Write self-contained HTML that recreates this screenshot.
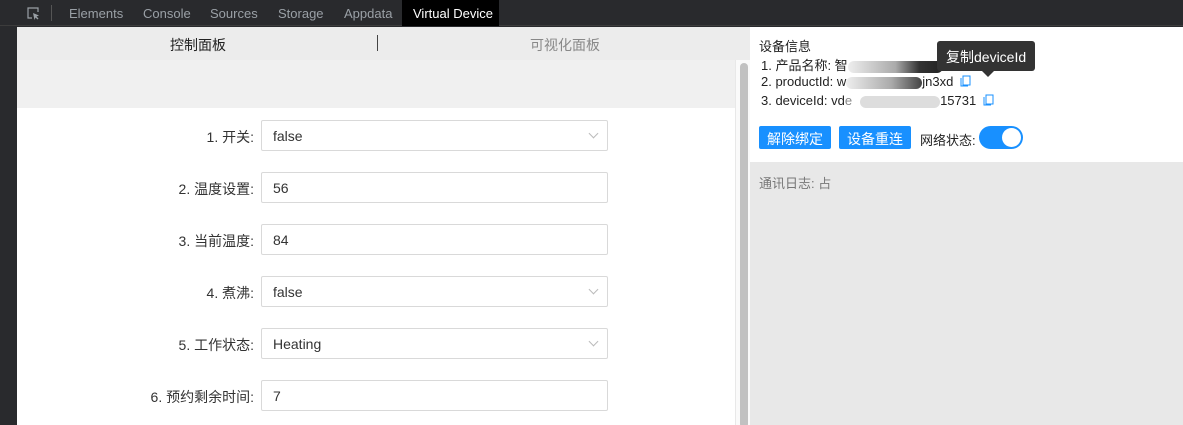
<!DOCTYPE html>
<html><head><meta charset="utf-8"><style>
*{margin:0;padding:0;box-sizing:border-box}
body{width:1183px;height:425px;overflow:hidden;background:#292a2d;font-family:"Liberation Sans","Noto Sans CJK SC",sans-serif;position:relative}
.top{position:absolute;left:0;top:0;width:1183px;height:26px;background:#292a2d;border-bottom:1px solid #3c3c3c;color:#9aa0a6;font-size:13px}
.top span{position:absolute;top:6px}
.vd{position:absolute;left:402px;top:0;width:97px;height:26px;background:#000;color:#fff;font-size:13px;padding:6px 0 0 11px}
.left{position:absolute;left:17px;top:27px;width:733px;height:398px;background:#fff;overflow:hidden}
.tabs{height:33px;background:#ececec;position:relative;font-size:14px}
.band{height:48px;background:#f0f0f0;width:718px}
.row{position:absolute;left:0;width:718px;height:31px;font-size:14px;color:#333}
.row label{position:absolute;right:481px;top:7px;white-space:nowrap}
.row .in{position:absolute;left:244px;width:347px;height:31px;border:1px solid #d9d9d9;border-radius:2px;padding:7px 11px}
.chev{position:absolute;right:10px;top:9px;width:7px;height:7px;border-right:1px solid #bbb;border-bottom:1px solid #bbb;transform:rotate(45deg)}
.sb{position:absolute;left:718px;top:33px;width:15px;height:365px;background:#fafafa;border-left:1px solid #e8e8e8}
.thumb{position:absolute;left:4px;top:3px;width:8px;height:365px;background:#c1c1c1;border-radius:4px}
.right{position:absolute;left:750px;top:27px;width:433px;height:398px;background:#e8e8e8}
.card{position:absolute;left:0;top:0;width:433px;height:135px;background:#fff;font-size:13px;color:#222}
.line{position:absolute;left:11px;white-space:nowrap}
.b{display:inline-block;vertical-align:middle;height:12px;border-radius:6px}
.btn{position:absolute;top:99px;height:23px;background:#1890ff;color:#fff;font-size:14px;padding:3px 8px;border-radius:2px}
</style></head><body>
<div class="top">
<svg style="position:absolute;left:27px;top:7px" width="13" height="13" viewBox="0 0 13 13"><path d="M5 11H1V1h10v4" fill="none" stroke="#9aa0a6" stroke-width="1.2"/><path d="M6 6l6 2.5-2.5 1 2 2-1 1-2-2-1 2.5z" fill="#9aa0a6"/></svg>
<div style="position:absolute;left:51px;top:5px;width:1px;height:16px;background:#555"></div>
<span style="left:69px">Elements</span><span style="left:143px">Console</span><span style="left:210px">Sources</span><span style="left:278px">Storage</span><span style="left:344px">Appdata</span>
<div class="vd">Virtual Device</div>
</div>
<div class="left">
<div class="tabs"><span style="position:absolute;left:153px;top:8px;color:#222">控制面板</span><div style="position:absolute;left:360px;top:8px;width:1px;height:16px;background:#444"></div><span style="position:absolute;left:513px;top:8px;color:#888">可视化面板</span></div>
<div class="band"></div>
<div class="row" style="top:93px"><label>1. 开关:</label><div class="in">false<div class="chev"></div></div></div>
<div class="row" style="top:145px"><label>2. 温度设置:</label><div class="in">56</div></div>
<div class="row" style="top:197px"><label>3. 当前温度:</label><div class="in">84</div></div>
<div class="row" style="top:249px"><label>4. 煮沸:</label><div class="in">false<div class="chev"></div></div></div>
<div class="row" style="top:301px"><label>5. 工作状态:</label><div class="in">Heating<div class="chev"></div></div></div>
<div class="row" style="top:353px"><label>6. 预约剩余时间:</label><div class="in">7</div></div>
<div class="sb"><div class="thumb"></div></div>
</div>
<div class="right">
<div class="card">
<div style="position:absolute;left:9px;top:9px">设备信息</div>
<div class="line" style="top:28px">1. 产品名称: 智<span class="b" style="width:95px;background:linear-gradient(90deg,#eee,#aaa 50%,#333 75%,#222)"></span></div>
<div class="line" style="top:47px">2. productId: w<span class="b" style="width:76px;background:linear-gradient(90deg,#eee,#aaa 60%,#444)"></span>jn3xd
<svg style="vertical-align:-1px;margin-left:3px" width="11" height="12"><rect x="3" y="1" width="7" height="9" fill="none" stroke="#1890ff"/><path d="M1 3v8h7" fill="none" stroke="#1890ff"/></svg></div>
<div class="line" style="top:66px">3. deviceId: vd<span style="color:#888">e</span><span class="b" style="width:80px;margin-left:8px;background:#ddd"></span>15731
<svg style="vertical-align:-1px;margin-left:3px" width="11" height="12"><rect x="3" y="1" width="7" height="9" fill="none" stroke="#1890ff"/><path d="M1 3v8h7" fill="none" stroke="#1890ff"/></svg></div>
<div class="btn" style="left:9px">解除绑定</div>
<div class="btn" style="left:89px">设备重连</div>
<div style="position:absolute;left:170px;top:103px">网络状态:</div>
<div style="position:absolute;left:229px;top:99px;width:44px;height:23px;border-radius:12px;background:#1890ff"><div style="position:absolute;right:2px;top:2px;width:19px;height:19px;border-radius:50%;background:#fff"></div></div>
</div>
<div style="position:absolute;left:9px;top:146px;font-size:13px;color:#777">通讯日志: 占</div>
<div style="position:absolute;left:187px;top:14px;height:30px;background:#333;color:#fff;font-size:14px;border-radius:3px;padding:6px 9px;white-space:nowrap">复制deviceId</div>
<div style="position:absolute;left:232px;top:44px;border:6px solid transparent;border-top-color:#333"></div>
</div>
</body></html>
